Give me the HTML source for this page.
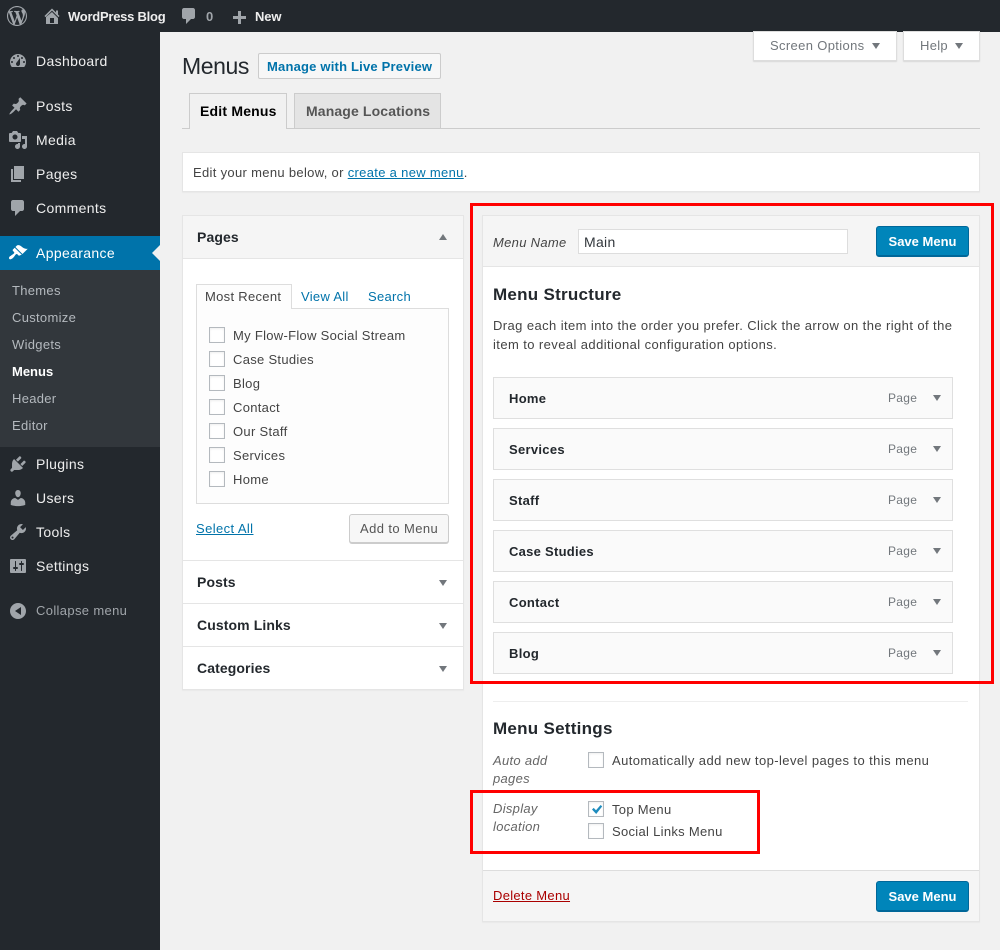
<!DOCTYPE html>
<html lang="en"><head><meta charset="utf-8"><title>Menus</title>
<style>
html,body{margin:0;padding:0;width:1000px;height:950px;overflow:hidden;background:#f1f1f1}
body{position:relative;font-family:"Liberation Sans",sans-serif;font-size:13px;color:#444;letter-spacing:.3px}
div,span.t,a,svg,i{position:absolute;display:block}
.t{white-space:nowrap;line-height:20px;height:20px;margin-top:1px}
a{text-decoration:none;color:#0073aa}
.u{text-decoration:underline}
.m{left:36px;font-size:14px;color:#eee;letter-spacing:.35px;margin-top:0}
.s{left:12px;color:#b4b9be;letter-spacing:.3px}
svg.ic{left:8px;width:20px;height:20px;fill:#a0a5aa}
.b{font-weight:bold}
.cb{width:14px;height:14px;background:#fff;border:1px solid #b4b9be;box-shadow:inset 0 1px 2px rgba(0,0,0,.07)}
.box{background:#fff;border:1px solid #e5e5e5;box-sizing:border-box;box-shadow:0 1px 1px rgba(0,0,0,.04)}
.h{font-size:14px;font-weight:bold;color:#23282d;letter-spacing:.1px;margin-top:0}
.tri{width:0;height:0;border-left:4px solid transparent;border-right:4px solid transparent}
.dn{border-top:6px solid #72777c}
.up{border-bottom:6px solid #72777c}
.item{left:493px;width:460px;height:42px;box-sizing:border-box;background:#fafafa;border:1px solid #dfdfdf}
.btn{background:#0085ba;border:1px solid #006799;border-bottom-width:2px;border-radius:3px;box-sizing:border-box;color:#fff;text-align:center;width:93px;height:31px;line-height:29px;font-size:13px;font-weight:bold;letter-spacing:0}
.red{border:3px solid #f00;box-sizing:border-box}
</style></head>
<body>
<!-- Admin bar -->
<div style="left:0;top:0;width:1000px;height:32px;background:#23282d"></div>
<svg class="ic" style="left:7px;top:6px" viewBox="0 0 20 20"><path d="M20 10c0-5.51-4.49-10-10-10C4.48 0 0 4.49 0 10c0 5.52 4.48 10 10 10 5.51 0 10-4.48 10-10zM7.78 15.37L4.37 6.22c.55-.02 1.17-.08 1.17-.08.5-.06.44-1.13-.06-1.11 0 0-1.45.11-2.37.11-.18 0-.37 0-.58-.01C4.12 2.69 6.87 1.11 10 1.11c2.33 0 4.45.87 6.05 2.34-.68-.11-1.65.39-1.65 1.58 0 .74.45 1.36.9 2.1.35.61.55 1.36.55 2.46 0 1.49-1.4 5-1.4 5l-3.03-8.37c.54-.02.82-.17.82-.17.5-.05.44-1.25-.06-1.22 0 0-1.44.12-2.38.12-.87 0-2.33-.12-2.33-.12-.5-.03-.56 1.2-.06 1.22l.92.08 1.26 3.41zM17.41 10c.24-.64.74-1.87.43-4.25.7 1.29 1.05 2.71 1.05 4.25 0 3.29-1.73 6.24-4.4 7.78.97-2.59 1.94-5.2 2.92-7.78zM6.1 18.09C3.12 16.65 1.11 13.53 1.11 10c0-1.3.23-2.48.72-3.59C3.25 10.3 4.67 14.2 6.1 18.09zm4.03-6.63l2.58 6.98c-.86.29-1.76.45-2.71.45-.79 0-1.57-.11-2.29-.33.81-2.38 1.62-4.74 2.42-7.1z"/></svg>
<svg class="ic" style="left:42px;top:6px" viewBox="0 0 20 20"><path d="M16 8.5l1.53 1.53-1.06 1.06L10 4.62l-6.47 6.47-1.06-1.06L10 2.5l4 4v-2h2v4zm-6-2.46l6 5.99V18H4v-6.97zM12 17v-5H8v5h4z"/></svg>
<span class="t b" style="left:68px;top:6px;color:#eee;letter-spacing:-.25px">WordPress Blog</span>
<svg class="ic" style="left:179px;top:6px" viewBox="0 0 20 20"><path d="M5 2h9c1.1 0 2 .9 2 2v7c0 1.1-.9 2-2 2h-2l-5 5v-5H5c-1.1 0-2-.9-2-2V4c0-1.1.9-2 2-2z"/></svg>
<span class="t b" style="left:206px;top:6px;color:#a0a5aa">0</span>
<svg class="ic" style="left:228.5px;top:8.5px" viewBox="0 0 20 20"><path d="M17 7v3h-5v5H9v-5H4V7h5V2h3v5h5z"/></svg>
<span class="t b" style="left:255px;top:6px;color:#eee;letter-spacing:-.1px">New</span>

<!-- Sidebar -->
<div style="left:0;top:32px;width:160px;height:918px;background:#23282d"></div>
<div style="left:0;top:236px;width:160px;height:34px;background:#0073aa"></div>
<div style="left:0;top:270px;width:160px;height:177px;background:#32373c"></div>
<div style="left:152px;top:245px;width:0;height:0;border:8px solid transparent;border-right-color:#f1f1f1;border-left:0"></div>

<svg class="ic" style="top:51px" viewBox="0 0 20 20"><path fill-rule="evenodd" d="M3.76 16h12.48c1.1-1.37 1.76-3.11 1.76-5 0-4.42-3.58-8-8-8s-8 3.58-8 8c0 1.89.66 3.63 1.76 5zM10 4c.55 0 1 .45 1 1s-.45 1-1 1-1-.45-1-1 .45-1 1-1zM6 6c.55 0 1 .45 1 1s-.45 1-1 1-1-.45-1-1 .45-1 1-1zm8 0c.55 0 1 .45 1 1s-.45 1-1 1-1-.45-1-1 .45-1 1-1zm-5.37 5.55L12 7v6c0 1.1-.9 2-2 2s-2-.9-2-2c0-.57.24-1.08.63-1.45zM4 10c.55 0 1 .45 1 1s-.45 1-1 1-1-.45-1-1 .45-1 1-1zm12 0c.55 0 1 .45 1 1s-.45 1-1 1-1-.45-1-1 .45-1 1-1z"/></svg>
<span class="t m" style="top:51px">Dashboard</span>
<svg class="ic" style="top:96px" viewBox="0 0 20 20"><path d="M10.44 3.02l1.82-1.82 6.36 6.35-1.83 1.82c-1.05-.68-2.48-.57-3.41.36l-.75.75c-.92.93-1.04 2.35-.35 3.41l-1.83 1.82-2.41-2.41-2.8 2.79c-.42.42-3.38 2.71-3.8 2.29s1.86-3.39 2.28-3.81l2.79-2.79L4.1 9.36l1.83-1.82c1.05.69 2.48.57 3.4-.36l.75-.75c.93-.92 1.05-2.35.36-3.41z"/></svg>
<span class="t m" style="top:96px">Posts</span>
<svg class="ic" style="top:130px" viewBox="0 0 20 20"><path fill-rule="evenodd" d="M13 11V4c0-.55-.45-1-1-1h-1.67L9 1H5L3.67 3H2c-.55 0-1 .45-1 1v7c0 .55.45 1 1 1h10c.55 0 1-.45 1-1zM7 4.5c1.38 0 2.5 1.12 2.5 2.5S8.38 9.5 7 9.5 4.5 8.38 4.5 7 5.62 4.5 7 4.5zM14 6h5v10.5c0 1.38-1.12 2.5-2.5 2.5S14 17.88 14 16.5s1.12-2.5 2.5-2.5c.17 0 .34.02.5.05V9h-3V6zm-4 8.05V13h2v3.5c0 1.38-1.12 2.5-2.5 2.5S7 17.88 7 16.5 8.12 14 9.5 14c.17 0 .34.02.5.05z"/></svg>
<span class="t m" style="top:130px">Media</span>
<svg class="ic" style="top:164px" viewBox="0 0 20 20"><path d="M6 15V2h10v13H6zm-1 1h8v2H3V5h2v11z"/></svg>
<span class="t m" style="top:164px">Pages</span>
<svg class="ic" style="top:198px" viewBox="0 0 20 20"><path d="M5 2h9c1.1 0 2 .9 2 2v7c0 1.1-.9 2-2 2h-2l-5 5v-5H5c-1.1 0-2-.9-2-2V4c0-1.1.9-2 2-2z"/></svg>
<span class="t m" style="top:198px">Comments</span>
<svg class="ic" style="top:243px;fill:#fff" viewBox="0 0 20 20"><path d="M14.48 11.06L7.41 3.99l1.5-1.5c.5-.56 2.3-.47 3.51.32 1.21.8 1.43 1.28 2.91 2.1 1.18.64 2.45 1.26 4.45.85zm-.71.71L6.7 4.7 4.93 6.47c-.39.39-.39 1.02 0 1.41l1.06 1.06c.39.39.39 1.03 0 1.42-.6.6-1.43 1.11-2.21 1.69-.35.26-.7.53-1.01.84C1.43 13.23.4 14.96 1.37 15.94c.98.98 2.71-.05 4.04-1.4.31-.31.58-.66.85-1.02.57-.78 1.08-1.61 1.69-2.21.39-.39 1.02-.39 1.41 0l1.06 1.06c.39.39 1.02.39 1.41 0z"/></svg>
<span class="t m" style="top:243px;color:#fff">Appearance</span>
<span class="t s" style="top:280px">Themes</span>
<span class="t s" style="top:307px">Customize</span>
<span class="t s" style="top:334px">Widgets</span>
<span class="t s b" style="top:361px;color:#fff;letter-spacing:0">Menus</span>
<span class="t s" style="top:388px">Header</span>
<span class="t s" style="top:415px">Editor</span>
<svg class="ic" style="top:454px" viewBox="0 0 20 20"><path d="M13.11 4.36L9.87 7.6 8 5.73l3.24-3.24c.35-.34 1.05-.2 1.56.32.52.51.66 1.21.31 1.55zm-8 1.77l.91-1.12 9.01 9.01-1.19.84c-.71.71-2.63 1.16-3.82 1.16H6.14L4.9 17.26c-.59.59-1.54.59-2.12 0-.59-.58-.59-1.53 0-2.12l1.24-1.24v-3.88c0-1.13.4-3.19 1.09-3.89zm7.26 3.97l3.24-3.24c.34-.35 1.04-.21 1.55.31.52.51.66 1.21.31 1.55l-3.24 3.25z"/></svg>
<span class="t m" style="top:454px">Plugins</span>
<svg class="ic" style="top:488px" viewBox="0 0 20 20"><path d="M10 9.25c-2.27 0-2.73-3.44-2.73-3.44C7 4.02 7.82 2 9.97 2c2.16 0 2.98 2.02 2.71 3.81 0 0-.41 3.44-2.68 3.44zm0 2.57L12.72 10c2.39 0 4.52 2.33 4.52 4.53v2.49s-3.65 1.13-7.24 1.13c-3.65 0-7.24-1.13-7.24-1.13v-2.49c0-2.25 1.94-4.48 4.47-4.48z"/></svg>
<span class="t m" style="top:488px">Users</span>
<svg class="ic" style="top:522px" viewBox="0 0 20 20"><path fill-rule="evenodd" d="M16.68 9.77c-1.34 1.34-3.3 1.67-4.95.99l-5.41 6.52c-.99.99-2.59.99-3.58 0s-.99-2.59 0-3.57l6.52-5.42c-.68-1.65-.35-3.61.99-4.95 1.28-1.28 3.12-1.62 4.72-1.06l-2.89 2.89 2.82 2.82 2.86-2.87c.53 1.58.18 3.39-1.08 4.65zM3.81 16.21c.4.39 1.04.39 1.43 0 .4-.4.4-1.04 0-1.43-.39-.4-1.03-.4-1.43 0-.39.39-.39 1.03 0 1.43z"/></svg>
<span class="t m" style="top:522px">Tools</span>
<svg class="ic" style="top:556px" viewBox="0 0 20 20"><path fill-rule="evenodd" d="M18 16V4c0-.55-.45-1-1-1H3c-.55 0-1 .45-1 1v12c0 .55.45 1 1 1h14c.55 0 1-.45 1-1zM8 11h1c.55 0 1 .45 1 1s-.45 1-1 1H8v1.5c0 .28-.22.5-.5.5s-.5-.22-.5-.5V13H6c-.55 0-1-.45-1-1s.45-1 1-1h1V5.5c0-.28.22-.5.5-.5s.5.22.5.5V11zm5-2h-1c-.55 0-1-.45-1-1s.45-1 1-1h1V5.5c0-.28.22-.5.5-.5s.5.22.5.5V7h1c.55 0 1 .45 1 1s-.45 1-1 1h-1v5.5c0 .28-.22.5-.5.5s-.5-.22-.5-.5V9z"/></svg>
<span class="t m" style="top:556px">Settings</span>
<svg class="ic" style="top:601px" viewBox="0 0 20 20"><path fill-rule="evenodd" d="M18 10c0-4.42-3.58-8-8-8s-8 3.58-8 8 3.58 8 8 8 8-3.58 8-8zm-5-4v8l-6-4z"/></svg>
<span class="t" style="left:36px;top:600px;color:#a0a5aa;letter-spacing:.35px">Collapse menu</span>

<!-- Screen options -->
<div class="box" style="left:753px;top:31px;width:144px;height:30px;border-color:#ddd;box-shadow:0 1px 1px rgba(0,0,0,.1)"></div>
<span class="t" style="left:770px;top:35px;color:#72777c;letter-spacing:.35px">Screen Options</span>
<i class="tri dn" style="left:872px;top:43px"></i>
<div class="box" style="left:903px;top:31px;width:77px;height:30px;border-color:#ddd;box-shadow:0 1px 1px rgba(0,0,0,.1)"></div>
<span class="t" style="left:920px;top:35px;color:#72777c">Help</span>
<i class="tri dn" style="left:955px;top:43px"></i>

<!-- Heading -->
<span class="t" style="left:182px;top:54px;font-size:23px;line-height:22px;height:22px;color:#23282d;letter-spacing:-.4px">Menus</span>
<div style="left:258px;top:53px;width:183px;height:26px;box-sizing:border-box;border:1px solid #ccc;border-radius:2px;background:#f7f7f7"></div>
<a class="t b" style="left:267px;top:56px;letter-spacing:.2px;color:#0073aa">Manage with Live Preview</a>

<!-- Tabs -->
<div style="left:182px;top:128px;width:798px;height:1px;background:#ccc"></div>
<div style="left:189px;top:93px;width:98px;height:36px;box-sizing:border-box;border:1px solid #ccc;border-bottom:0;background:#f1f1f1"></div>
<span class="t b" style="left:200px;top:101px;font-size:14px;color:#000;letter-spacing:.2px;margin-top:0">Edit Menus</span>
<div style="left:294px;top:93px;width:147px;height:35px;box-sizing:border-box;border:1px solid #ccc;border-bottom:0;background:#e4e4e4"></div>
<span class="t b" style="left:306px;top:101px;font-size:14px;color:#555;letter-spacing:.13px;margin-top:0">Manage Locations</span>

<!-- Notice -->
<div class="box" style="left:182px;top:152px;width:798px;height:40px"></div>
<span class="t" style="left:193px;top:162px;letter-spacing:.32px">Edit your menu below, or <a class="u" style="position:static;display:inline">create a new menu</a>.</span>

<!-- Left column -->
<div class="box" style="left:182px;top:215px;width:282px;height:475px"></div>
<div style="left:183px;top:216px;width:280px;height:43px;box-sizing:border-box;background:#f5f5f5;border-bottom:1px solid #e5e5e5"></div>
<span class="t h" style="left:197px;top:227px">Pages</span>
<i class="tri up" style="left:439px;top:234px"></i>

<div style="left:196px;top:308px;width:253px;height:196px;box-sizing:border-box;border:1px solid #ddd;background:#fdfdfd"></div>
<div style="left:196px;top:284px;width:96px;height:25px;box-sizing:border-box;border:1px solid #ddd;border-bottom:0;background:#fdfdfd"></div>
<span class="t" style="left:205px;top:286px">Most Recent</span>
<a class="t" style="left:301px;top:286px">View All</a>
<a class="t" style="left:368px;top:286px">Search</a>

<i class="cb" style="left:209px;top:327px"></i><span class="t" style="left:233px;top:325px">My Flow-Flow Social Stream</span>
<i class="cb" style="left:209px;top:351px"></i><span class="t" style="left:233px;top:349px">Case Studies</span>
<i class="cb" style="left:209px;top:375px"></i><span class="t" style="left:233px;top:373px">Blog</span>
<i class="cb" style="left:209px;top:399px"></i><span class="t" style="left:233px;top:397px">Contact</span>
<i class="cb" style="left:209px;top:423px"></i><span class="t" style="left:233px;top:421px">Our Staff</span>
<i class="cb" style="left:209px;top:447px"></i><span class="t" style="left:233px;top:445px">Services</span>
<i class="cb" style="left:209px;top:471px"></i><span class="t" style="left:233px;top:469px">Home</span>

<a class="t u" style="left:196px;top:518px;letter-spacing:.4px">Select All</a>
<div style="left:349px;top:514px;width:100px;height:29px;box-sizing:border-box;border:1px solid #ccc;border-radius:3px;background:#f7f7f7;box-shadow:0 1px 0 #ccc"></div>
<span class="t" style="left:360px;top:518px;color:#555;letter-spacing:.4px">Add to Menu</span>

<div style="left:183px;top:560px;width:280px;height:1px;background:#e5e5e5"></div>
<span class="t h" style="left:197px;top:572px">Posts</span><i class="tri dn" style="left:439px;top:580px"></i>
<div style="left:183px;top:603px;width:280px;height:1px;background:#e5e5e5"></div>
<span class="t h" style="left:197px;top:615px">Custom Links</span><i class="tri dn" style="left:439px;top:623px"></i>
<div style="left:183px;top:646px;width:280px;height:1px;background:#e5e5e5"></div>
<span class="t h" style="left:197px;top:658px">Categories</span><i class="tri dn" style="left:439px;top:666px"></i>

<!-- Right column -->
<div class="box" style="left:482px;top:215px;width:498px;height:707px"></div>
<div style="left:483px;top:216px;width:496px;height:51px;box-sizing:border-box;background:#f5f5f5;border-bottom:1px solid #e5e5e5"></div>
<span class="t" style="left:493px;top:232px;font-style:italic">Menu Name</span>
<div style="left:578px;top:229px;width:270px;height:25px;box-sizing:border-box;border:1px solid #ddd;background:#fff"></div>
<span class="t" style="left:584px;top:231px;font-size:14px;color:#32373c">Main</span>
<div class="btn" style="left:876px;top:226px">Save Menu</div>

<span class="t b" style="left:493px;top:284px;font-size:17px;color:#23282d;letter-spacing:.27px">Menu Structure</span>
<span class="t" style="left:493px;top:315px;letter-spacing:.41px">Drag each item into the order you prefer. Click the arrow on the right of the</span>
<span class="t" style="left:493px;top:334px;letter-spacing:.41px">item to reveal additional configuration options.</span>

<div class="item" style="top:377px"></div><span class="t b" style="left:509px;top:388px;color:#23282d">Home</span><span class="t" style="left:888px;top:387px;font-size:12px;color:#72777c">Page</span><i class="tri dn" style="left:933px;top:395px"></i>
<div class="item" style="top:428px"></div><span class="t b" style="left:509px;top:439px;color:#23282d">Services</span><span class="t" style="left:888px;top:438px;font-size:12px;color:#72777c">Page</span><i class="tri dn" style="left:933px;top:446px"></i>
<div class="item" style="top:479px"></div><span class="t b" style="left:509px;top:490px;color:#23282d">Staff</span><span class="t" style="left:888px;top:489px;font-size:12px;color:#72777c">Page</span><i class="tri dn" style="left:933px;top:497px"></i>
<div class="item" style="top:530px"></div><span class="t b" style="left:509px;top:541px;color:#23282d;letter-spacing:.27px">Case Studies</span><span class="t" style="left:888px;top:540px;font-size:12px;color:#72777c">Page</span><i class="tri dn" style="left:933px;top:548px"></i>
<div class="item" style="top:581px"></div><span class="t b" style="left:509px;top:592px;color:#23282d">Contact</span><span class="t" style="left:888px;top:591px;font-size:12px;color:#72777c">Page</span><i class="tri dn" style="left:933px;top:599px"></i>
<div class="item" style="top:632px"></div><span class="t b" style="left:509px;top:643px;color:#23282d">Blog</span><span class="t" style="left:888px;top:642px;font-size:12px;color:#72777c">Page</span><i class="tri dn" style="left:933px;top:650px"></i>

<div style="left:493px;top:701px;width:475px;height:1px;background:#eee"></div>
<span class="t b" style="left:493px;top:718px;font-size:17px;color:#23282d;letter-spacing:.27px">Menu Settings</span>
<span class="t" style="left:493px;top:750px;font-style:italic;color:#666">Auto add</span>
<span class="t" style="left:493px;top:768px;font-style:italic;color:#666">pages</span>
<i class="cb" style="left:588px;top:752px"></i>
<span class="t" style="left:612px;top:750px;letter-spacing:.42px">Automatically add new top-level pages to this menu</span>
<span class="t" style="left:493px;top:798px;font-style:italic;color:#666">Display</span>
<span class="t" style="left:493px;top:816px;font-style:italic;color:#666">location</span>
<i class="cb" style="left:588px;top:801px"></i>
<svg style="left:589px;top:802px;width:16px;height:16px" viewBox="0 0 16 16"><path d="M3 7.5l1.7-1.6L7 8.2 11.6 3l1.6 1.4L7.2 12z" fill="#1e8cbe"/></svg>
<span class="t" style="left:612px;top:799px">Top Menu</span>
<i class="cb" style="left:588px;top:823px"></i>
<span class="t" style="left:612px;top:821px">Social Links Menu</span>

<div style="left:483px;top:870px;width:496px;height:51px;box-sizing:border-box;background:#f5f5f5;border-top:1px solid #ddd"></div>
<a class="t u" style="left:493px;top:885px;color:#a00">Delete Menu</a>
<div class="btn" style="left:876px;top:881px">Save Menu</div>

<!-- Red annotations -->
<div class="red" style="left:470px;top:203px;width:524px;height:481px"></div>
<div class="red" style="left:470px;top:790px;width:290px;height:64px"></div>
</body></html>
